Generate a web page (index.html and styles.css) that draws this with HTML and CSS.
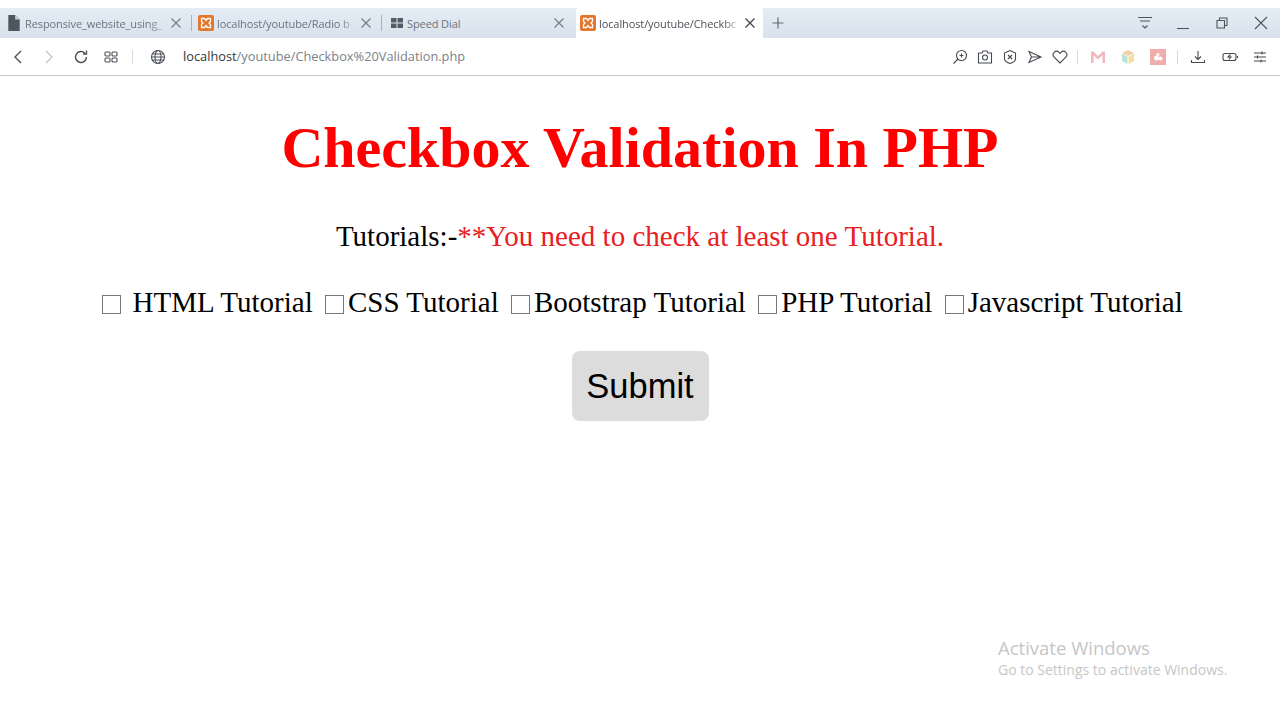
FILE: index.html
```html
<!DOCTYPE html>
<html lang="en">
<head>
  <meta charset="UTF-8" />
  <title>Checkbox Validation In PHP</title>
  <link rel="stylesheet" href="styles.css">
</head>
<body>

<div class="tabstrip">
  <div class="tab tab-one">
    <svg class="fav" viewBox="0 0 14 14"><path d="M2 0h6l4 4v10H2z" fill="#50565e"/><path d="M8 0v4h4z" fill="#c9d2dc"/></svg>
    <span class="tab-title">Responsive_website_using_</span>
    <svg class="tab-x" viewBox="0 0 12 12"><path d="M1.500 1.500l9 9M10.500 1.500l-9 9"/></svg>
  </div>
  <div class="tab-sep"></div>
  <div class="tab tab-two">
    <svg class="fav" viewBox="0 0 16 16"><rect width="16" height="16" rx="2" fill="#e2762a"/><path d="M3.500 3.500h3L8 5.500l1.500-2h3v3L11 8l1.500 1.500v3h-3L8 10.500l-1.500 2h-3v-3L5 8 3.500 6.500z" fill="none" stroke="#fff" stroke-width="1.300"/></svg>
    <span class="tab-title">localhost/youtube/Radio b</span>
    <svg class="tab-x" viewBox="0 0 12 12"><path d="M1.500 1.500l9 9M10.500 1.500l-9 9"/></svg>
  </div>
  <div class="tab-sep"></div>
  <div class="tab tab-three">
    <svg class="fav" viewBox="0 0 14 14"><path d="M1 2h5.500v4.500H1zM7.500 2H13v4.500H7.500zM1 7.500h5.500V12H1zM7.500 7.500H13V12H7.500z" fill="#565c64"/></svg>
    <span class="tab-title">Speed Dial</span>
    <svg class="tab-x" viewBox="0 0 12 12"><path d="M1.500 1.500l9 9M10.500 1.500l-9 9"/></svg>
  </div>
  <div class="tab tab-active">
    <svg class="fav" viewBox="0 0 16 16"><rect width="16" height="16" rx="2" fill="#e2762a"/><path d="M3.500 3.500h3L8 5.500l1.500-2h3v3L11 8l1.500 1.500v3h-3L8 10.500l-1.500 2h-3v-3L5 8 3.500 6.500z" fill="none" stroke="#fff" stroke-width="1.300"/></svg>
    <span class="tab-title">localhost/youtube/Checkbc</span>
    <svg class="tab-x" viewBox="0 0 12 12"><path d="M1.500 1.500l9 9M10.500 1.500l-9 9"/></svg>
  </div>
  <svg class="new-tab" viewBox="0 0 12 12"><path d="M6 .5v11M.5 6h11"/></svg>
  <div class="win-btns">
    <svg class="win win-menu" viewBox="0 0 16 14"><path d="M1 1.500h14M3 5h10M5.500 9.500L8 12l2.500-2.500"/></svg>
    <svg class="win" viewBox="0 0 14 14"><path d="M1 12.500h12"/></svg>
    <svg class="win" viewBox="0 0 14 14"><path d="M2 4.500h7.500V12H2zM4.500 4.500V2H12v7.500H9.500"/></svg>
    <svg class="win" viewBox="0 0 14 14"><path d="M1 1l12 12M13 1L1 13"/></svg>
  </div>
</div>

<div class="toolbar">
  <svg class="nav" viewBox="0 0 16 16"><path d="M11 2L5 8l6 6"/></svg>
  <svg class="nav nav-off" viewBox="0 0 16 16"><path d="M5 2l6 6-6 6"/></svg>
  <svg class="nav" viewBox="0 0 16 16"><path d="M13.500 8a5.500 5.500 0 1 1-1.700-4M13.500 1.500V5H10"/></svg>
  <svg class="nav nav-small" viewBox="0 0 14 14"><rect x="1" y="2" width="5" height="4" rx="1"/><rect x="8" y="2" width="5" height="4" rx="1"/><rect x="1" y="8" width="5" height="4" rx="1"/><rect x="8" y="8" width="5" height="4" rx="1"/></svg>
  <div class="bar-sep"></div>
  <svg class="globe" viewBox="0 0 16 16"><circle cx="8" cy="8" r="6.500"/><ellipse cx="8" cy="8" rx="3" ry="6.500"/><path d="M1.500 8h13M2.500 5h11M2.500 11h11"/></svg>
  <div class="url"><span class="url-host">localhost</span>/youtube/Checkbox%20Validation.php</div>
  <div class="tools">
    <svg class="tool" viewBox="0 0 16 16"><circle cx="9.500" cy="6.500" r="5"/><path d="M6 10l-4.500 4.500M9.500 4.500v4M7.500 6.500h4"/></svg>
    <svg class="tool" viewBox="0 0 16 16"><path d="M1.500 4h3.500l1-2h4l1 2h3.500v10h-13z"/><circle cx="8" cy="8.500" r="2.500"/></svg>
    <svg class="tool" viewBox="0 0 16 16"><path d="M8 1.500l5.500 2.500v6c0 2-2.500 3.500-5.500 4.500-3-1-5.500-2.500-5.500-4.500V4z"/><path d="M6 6l4 4M10 6l-4 4"/></svg>
    <svg class="tool" viewBox="0 0 16 16"><path d="M2 2.500L14 8 2 13.500 4.500 8zM4.500 8H14"/></svg>
    <svg class="tool" viewBox="0 0 16 16"><path d="M8 14L2.200 8.200a3.400 3.400 0 0 1 0-4.800 3.400 3.400 0 0 1 4.800 0l1 1 1-1a3.400 3.400 0 0 1 4.800 0 3.400 3.400 0 0 1 0 4.800z"/></svg>
    <div class="tool-sep"></div>
    <svg class="ext" viewBox="0 0 16 14"><path d="M1 1.500h2.500L8 6l4.500-4.500H15V13h-2.500V5.500L8 9.500l-4.500-4V13H1z" fill="#f0b9bd"/></svg>
    <svg class="ext" viewBox="0 0 16 16"><path d="M8 1l6 3-6 3-6-3z" fill="#f3cfa6"/><path d="M2 4.500l5.500 3V15L2 12z" fill="#bfe3d6"/><path d="M14 4.500l-5.500 3V15l5.500-3z" fill="#f2df9c"/></svg>
    <svg class="ext" viewBox="0 0 16 16"><rect width="16" height="16" fill="#f1adac"/><circle cx="6.500" cy="9" r="2.500" fill="#fff"/><circle cx="10.500" cy="9.500" r="2" fill="#fff"/><circle cx="8" cy="5.500" r="1.500" fill="#fff"/></svg>
    <div class="tool-sep tool-sep-last"></div>
    <svg class="tool" viewBox="0 0 16 16"><path d="M8 2v8M5 7.500L8 10.500l3-3M1.500 11v2.500h13V11"/></svg>
    <svg class="tool tool-battery" viewBox="0 0 16 16"><rect x="1" y="4.500" width="13" height="7" rx="2"/><path d="M15.500 7v2M8.500 5.500L6 8h3l-2 2.500"/></svg>
    <svg class="tool tool-sliders" viewBox="0 0 16 16"><path d="M2 4h12M2 8h12M2 12h12M10 2.500v3M5.500 6.500v3M9 10.500v3"/></svg>
  </div>
</div>

<form class="page">
  <h1>Checkbox Validation In PHP</h1>
  <p class="line">Tutorials:-<span class="err">**You need to check at least one Tutorial.</span></p>
  <p class="line checks">
    <input type="checkbox"> HTML Tutorial
    <input type="checkbox">CSS Tutorial
    <input type="checkbox">Bootstrap Tutorial
    <input type="checkbox">PHP Tutorial
    <input type="checkbox">Javascript Tutorial
  </p>
  <button class="submit" type="button">Submit</button>
</form>

<div class="activate">
  <div class="activate-big">Activate Windows</div>
  <div>Go to Settings to activate Windows.</div>
</div>

</body>
</html>
```

FILE: styles.css
```css
* {
  margin: 0; padding: 0; box-sizing: border-box;
}
html, body {
  height: 100%;
  overflow: hidden;
}
body {
  background: #fff;
  color: #000;
  font-family: 'Liberation Serif', serif;
  padding-top: 8px;
}
svg {
  display: block;
  flex: none;
  fill: none;
}

/* Tabs */
.tabstrip {
  display: flex;
  align-items: center;
  height: 30px;
  background: linear-gradient(#e4ecf4, #d9e2ec);
  font-family: 'Open Sans', sans-serif;
  font-size: 11px;
  color: #6a7480;
}
.tab {
  display: flex;
  align-items: center;
  height: 30px;
  padding: 0 9px 0 6px;
}
.tab-one { width: 191px; }
.tab-two { width: 189px; }
.tab-three { width: 190px; padding-left: 8px; padding-right: 7px; }
.tab-active {
  width: 187px;
  margin-left: 4px;
  background: #fff;
  color: #4a5058;
  border-radius: 3px 3px 0 0;
  padding-left: 4px;
  padding-right: 7px;
}
.tab-sep {
  width: 1px;
  height: 16px;
  background: #aab4be;
}
.fav {
  width: 16px;
  height: 16px;
  margin-right: 3px;
}
.tab-three .fav { width: 14px; height: 14px; margin-right: 3px; }
.tab-title {
  flex: 1;
  white-space: nowrap;
  overflow: hidden;
  letter-spacing: -0.1px;
  -webkit-mask-image: linear-gradient(to right, #000 85%, transparent);
  mask-image: linear-gradient(to right, #000 85%, transparent);
}
.tab-three .tab-title {
  -webkit-mask-image: none;
  mask-image: none;
}
.tab-x {
  width: 12px;
  height: 12px;
  stroke: #78818b;
  stroke-width: 1.300;
}
.tab-active .tab-x { stroke: #444; }
.new-tab {
  width: 12px;
  height: 12px;
  margin-left: 9px;
  stroke: #626a73;
  stroke-width: 1.200;
}
.win-btns {
  display: flex;
  align-items: center;
  gap: 25px;
  margin-left: auto;
  padding-right: 12px;
}
.win {
  width: 14px;
  height: 14px;
  stroke: #4d545c;
  stroke-width: 1.100;
}
.win-menu {
  width: 16px;
  margin-right: -2px;
}

/* Address bar */
.toolbar {
  display: flex;
  align-items: center;
  height: 38px;
  background: #fff;
  border-bottom: 1px solid #c4c6c8;
  padding: 0 12px 0 10px;
}
.nav {
  width: 16px;
  height: 16px;
  margin-right: 15px;
  stroke: #4a5058;
  stroke-width: 1.400;
}
.nav-off { stroke: #c2c6ca; margin-right: 16px; }
.nav-small {
  width: 14px;
  height: 14px;
  margin-right: 14px;
  stroke-width: 1.100;
}
.bar-sep {
  width: 1px;
  height: 14px;
  background: #d8dadc;
}
.globe {
  width: 16px;
  height: 16px;
  margin-left: 17px;
  stroke: #4a5058;
  stroke-width: 1.100;
}
.url {
  margin-left: 17px;
  margin-top: -2px;
  font-family: 'Open Sans', sans-serif;
  font-size: 12.800px;
  color: #7b8189;
}
.url-host { color: #33383e; }
.tools {
  display: flex;
  align-items: center;
  gap: 9px;
  margin-left: auto;
}
.tool {
  width: 16px;
  height: 16px;
  stroke: #444a50;
  stroke-width: 1.100;
}
.tool-battery { margin-left: 7px; }
.tool-sliders { margin-left: 5px; }
.ext {
  width: 16px;
  height: 16px;
  margin: 0 2.500px;
}
.tool-sep {
  width: 1px;
  height: 14px;
  background: #d8dadc;
}
.tool-sep-last { margin-right: 3px; }

/* Page */
.page {
  text-align: center;
}
h1 {
  margin-top: 38px;
  font-size: 58px;
  line-height: 68px;
  color: #f00;
}
.line {
  font-size: 29px;
  line-height: 34px;
}
.page h1 + .line { margin-top: 37px; }
.checks {
  margin-top: 32px;
}
.err { color: #e8201f; }
input[type="checkbox"] {
  appearance: none;
  display: inline-block;
  width: 19px;
  height: 19px;
  margin: 0 4px 0 5px;
  border: 1.500px solid #777;
  background: #fff;
  vertical-align: -2px;
}
.submit {
  display: block;
  width: 137px;
  height: 70px;
  margin: 32px auto 0;
  background: #dcdcdc;
  border: none;
  border-radius: 8px;
  font-family: 'Liberation Sans', sans-serif;
  font-size: 34.500px;
  color: #000;
}

/* Watermark */
.activate {
  position: absolute;
  left: 998px;
  top: 637px;
  font-family: 'Open Sans', sans-serif;
  font-size: 14px;
  line-height: 22px;
  color: #c6c6c6;
}
.activate-big { font-size: 18.500px; }
```
